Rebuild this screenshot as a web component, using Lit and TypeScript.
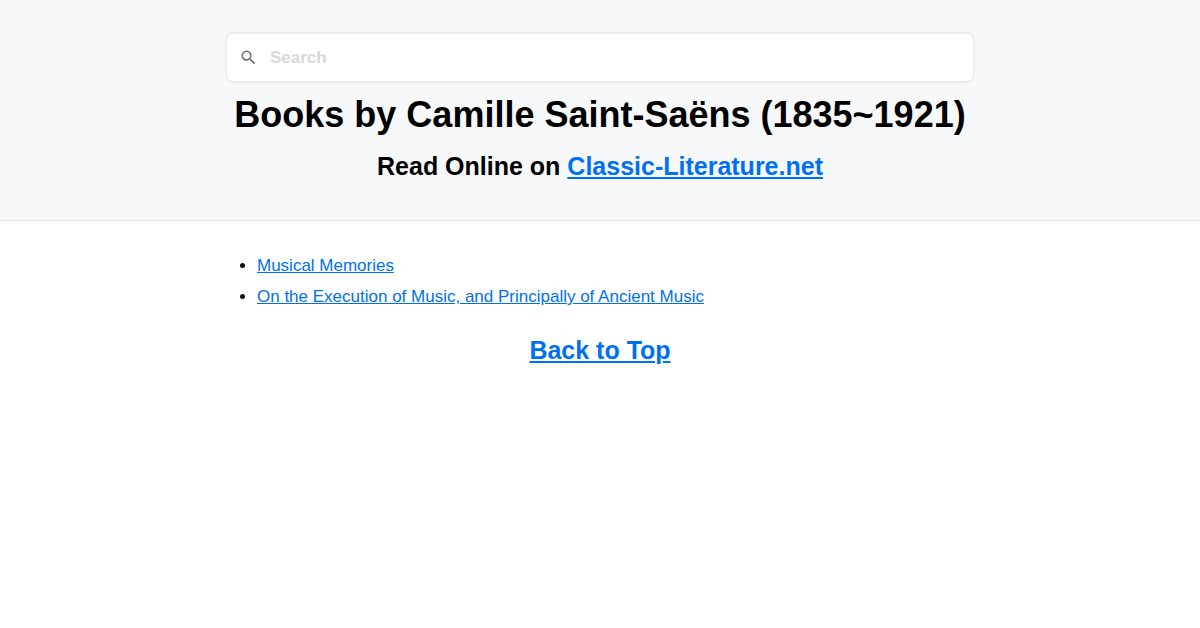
import { LitElement, html, css } from "lit";
import { customElement } from "lit/decorators.js";

const books = [
  "Musical Memories",
  "On the Execution of Music, and Principally of Ancient Music",
];

@customElement("app-root")
export class AppRoot extends LitElement {
  static styles = css`
    :host {
      display: block;
      font: 17px/25px "Liberation Sans", Arial, sans-serif;
      color: #111;
      background: #fff;
    }
    .hero {
      padding: 32px 16px 38px;
      background: #f7f8fa;
      border-bottom: 1px solid #e3e4e7;
      color: #000;
      text-align: center;
    }
    .column {
      max-width: 750px;
      margin: 0 auto;
    }
    .search {
      display: flex;
      align-items: center;
      box-sizing: border-box;
      height: 51px;
      gap: 12px;
      padding: 0 12px;
      border: 2px solid #ececec;
      border-radius: 8px;
      background: #fff;
    }
    .icon {
      flex: none;
      width: 19px;
      height: 19px;
      fill: #707070;
    }
    .field {
      flex: 1;
      min-width: 0;
      padding: 0;
      border: 0;
      outline: 0;
      background: none;
      font: bold 17px/22px "Liberation Sans", Arial, sans-serif;
      color: #222;
    }
    .field::placeholder {
      color: #d8d8d8;
      opacity: 1;
    }
    .title {
      margin: 8px 0 0;
      font-size: 36px;
      line-height: 48px;
    }
    .subtitle {
      margin: 11px 0 0;
      font-size: 25px;
      line-height: 32px;
    }
    .link {
      color: #0070f3;
      text-decoration: underline;
    }
    .main {
      padding: 32px 16px;
    }
    .books {
      margin: 0;
      padding: 0 0 0 32px;
    }
    .book {
      margin-bottom: 6px;
    }
    .back {
      margin: 25px 0 0;
      font-size: 25px;
      line-height: 32px;
      text-align: center;
    }
  `;

  render() {
    return html`
      <header class="hero" id="top">
        <div class="column">
          <form class="search" role="search">
            <svg class="icon" viewBox="0 0 24 24" aria-hidden="true">
              <path d="M15.5 14h-.79l-.28-.27A6.471 6.471 0 0 0 16 9.5 6.5 6.5 0 1 0 9.5 16c1.61 0 3.09-.59 4.23-1.57l.27.28v.79l5 4.99L20.49 19l-4.99-5zm-6 0C7.01 14 5 11.99 5 9.5S7.01 5 9.5 5 14 7.01 14 9.5 11.99 14 9.5 14z" />
            </svg>
            <input class="field" type="search" placeholder="Search" aria-label="Search" />
          </form>
          <h1 class="title">Books by Camille Saint-Saëns (1835~1921)</h1>
          <h2 class="subtitle">Read Online on <a class="link" href="#">Classic-Literature.net</a></h2>
        </div>
      </header>
      <main class="main">
        <div class="column">
          <ul class="books">
            ${books.map((b) => html`<li class="book"><a class="link" href="#">${b}</a></li>`)}
          </ul>
          <h2 class="back"><a class="link" href="#top">Back to Top</a></h2>
        </div>
      </main>
    `;
  }
}
